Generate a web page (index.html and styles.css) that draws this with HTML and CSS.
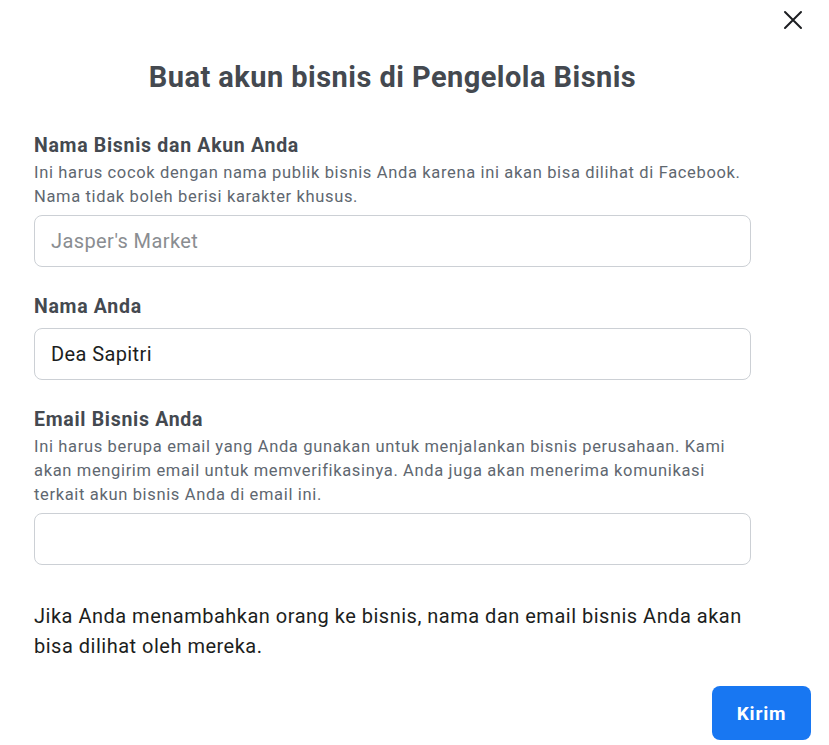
FILE: index.html
```html
<!DOCTYPE html>
<html lang="id">
<head>
<meta charset="utf-8">
<title>Buat akun bisnis</title>
<link rel="stylesheet" href="styles.css">
</head>
<body>
<div class="dialog">
  <button class="close" aria-label="Tutup">
    <svg width="20" height="20" viewBox="0 0 20 20"><path d="M2 2 L18 18 M18 2 L2 18" stroke="#1c1e21" stroke-width="2" stroke-linecap="round" fill="none"/></svg>
  </button>
  <div class="content">
    <h1 class="title">Buat akun bisnis di Pengelola Bisnis</h1>
    <div class="field">
      <div class="label">Nama Bisnis dan Akun Anda</div>
      <div class="desc">Ini harus cocok dengan nama publik bisnis Anda karena ini akan bisa dilihat di Facebook. Nama tidak boleh berisi karakter khusus.</div>
      <input class="input" type="text" placeholder="Jasper's Market">
    </div>
    <div class="field">
      <div class="label">Nama Anda</div>
      <input class="input" type="text" value="Dea Sapitri">
    </div>
    <div class="field">
      <div class="label">Email Bisnis Anda</div>
      <div class="desc">Ini harus berupa email yang Anda gunakan untuk menjalankan bisnis perusahaan. Kami akan mengirim email untuk memverifikasinya. Anda juga akan menerima komunikasi terkait akun bisnis Anda di email ini.</div>
      <input class="input" type="email">
    </div>
    <p class="note">Jika Anda menambahkan orang ke bisnis, nama dan email bisnis Anda akan bisa dilihat oleh mereka.</p>
  </div>
  <div class="footer">
    <button class="submit">Kirim</button>
  </div>
</div>
</body>
</html>
```
FILE: styles.css
```css
* { box-sizing: border-box; }
html, body { margin: 0; padding: 0; background: #fff; }
body { font-family: Roboto, "Noto Sans", "Liberation Sans", sans-serif; color: #1c1e21; }
.dialog { position: relative; width: 829px; height: 745px; padding: 0 18px 0 34px; display: flex; flex-direction: column; }
.close { position: absolute; top: 10px; right: 26px; width: 20px; height: 20px; padding: 0; border: 0; background: transparent; }
.close svg { display: block; }
.content { width: 717px; display: flex; flex-direction: column; }
.title { margin: 59px 0 39px; text-align: center; font-size: 29px; font-weight: 700; color: #444950; letter-spacing: 0.45px; line-height: 36px; }
.field { display: flex; flex-direction: column; margin-bottom: 28px; }
.label { font-size: 19.5px; font-weight: 700; color: #444950; line-height: 24px; letter-spacing: 0.7px; }
.desc { margin-top: 3px; font-size: 16.5px; line-height: 24px; color: #606770; letter-spacing: 0.65px; }
.label + .input { margin-top: 9px; }
.desc + .input { margin-top: 6px; }
.input { width: 100%; height: 52px; border: 1px solid #ccd0d5; border-radius: 8px; padding: 0 16px; font-family: inherit; font-size: 20px; letter-spacing: 0.4px; color: #1c1e21; outline: none; }
.input::placeholder { color: #8a8d91; }
.note { margin: 8px 0 0; font-size: 20px; line-height: 30px; letter-spacing: 0.5px; color: #1c1e21; }
.footer { flex: 1; display: flex; justify-content: flex-end; align-items: flex-end; padding-bottom: 5px; }
.submit { width: 99px; height: 54px; border: 0; border-radius: 8px; background: #1877f2; color: #fff; font-family: inherit; font-size: 19px; letter-spacing: 0.8px; font-weight: 700; }
```
